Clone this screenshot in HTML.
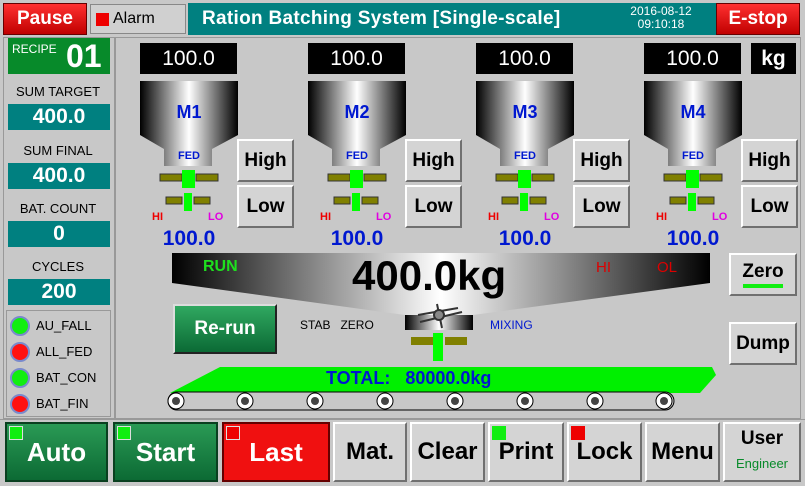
<!DOCTYPE html>
<html><head><meta charset="utf-8"><style>
*{margin:0;padding:0;box-sizing:border-box}
body{width:805px;height:486px;background:#c8c8c8;font-family:"Liberation Sans",sans-serif;position:relative;overflow:hidden}
.a{position:absolute}
.c{display:flex;align-items:center;justify-content:center}
.lbl{font-size:13px;color:#000;text-align:center;width:110px;left:3px}
.tv{left:8px;width:102px;height:26px;background:#008080;color:#fff;font-weight:bold;font-size:21px}
.blk{background:#000;color:#fff;font-size:21px;height:31px;width:97px;top:43px}
.btn{background:#d4d4d4;border:2px solid;border-color:#fff #707070 #707070 #fff;font-weight:bold;font-size:19px}
.bb{top:422px;height:60px;font-size:26px;font-weight:bold;font-family:"Liberation Sans Narrow","Liberation Sans",sans-serif}
.g{background:linear-gradient(#2a9a55,#0c6a34);color:#fff;border:2px solid #0a4020}
.sq{position:absolute;left:2px;top:2px;width:14px;height:14px;border:1px solid #ddd}
.dot{width:20px;height:20px;border-radius:50%;border:2px solid #7a8acc;left:10px}
.dl{left:36px;font-size:13px}
.m{color:#0018d0;font-weight:bold;font-size:18px;top:102px;width:98px;text-align:center}
.fd{color:#0018d0;font-size:11px;font-weight:bold;top:150px;width:98px;text-align:center}
.hi{color:#e00;font-size:11px;top:211px;font-weight:bold}
.lo{color:#e000e0;font-size:11px;top:211px;font-weight:bold}
.bv{color:#0018d0;font-size:21px;font-weight:bold;top:227px;width:98px;text-align:center}
</style></head><body>
<div class="a c" style="left:3px;top:3px;width:84px;height:32px;background:linear-gradient(#ff3030,#c00000);color:#fff;font-weight:bold;font-size:19px;border:1px solid #600">Pause</div>
<div class="a" style="left:90px;top:4px;width:96px;height:30px;background:#d0d0d0;border:1px solid #888;font-size:16px;padding:5px 0 0 22px">Alarm<div class="a" style="left:5px;top:8px;width:13px;height:13px;background:#e00"></div></div>
<div class="a" style="left:188px;top:3px;width:528px;height:32px;background:#008080"></div>
<div class="a" style="left:202px;top:8px;color:#fff;font-weight:bold;font-size:19px;letter-spacing:0.3px">Ration Batching System [Single-scale]</div>
<div class="a" style="left:622px;top:5px;color:#fff;font-size:12px;text-align:center;line-height:13px;width:78px">2016-08-12<br>09:10:18</div>
<div class="a c" style="left:716px;top:3px;width:84px;height:32px;background:linear-gradient(#ff3030,#c00000);color:#fff;font-weight:bold;font-size:19px;border:1px solid #600">E-stop</div>
<div class="a" style="left:3px;top:37px;width:112px;height:382px;border:1px solid #999"></div>
<div class="a" style="left:8px;top:38px;width:102px;height:36px;background:#078a2a;color:#fff"><span class="a" style="left:4px;top:4px;font-size:12px">RECIPE</span><span class="a" style="left:58px;top:0;font-size:32px;font-weight:bold">01</span></div>
<div class="a lbl" style="top:84px">SUM TARGET</div><div class="a tv c" style="top:104px">400.0</div>
<div class="a lbl" style="top:143px">SUM FINAL</div><div class="a tv c" style="top:163px">400.0</div>
<div class="a lbl" style="top:201px">BAT. COUNT</div><div class="a tv c" style="top:221px">0</div>
<div class="a lbl" style="top:259px">CYCLES</div><div class="a tv c" style="top:279px">200</div>
<div class="a" style="left:6px;top:310px;width:105px;height:107px;border:1px solid #999"></div>
<div class="a dot" style="top:316px;background:#1e1"></div><div class="a dl" style="top:318px">AU_FALL</div>
<div class="a dot" style="top:342px;background:#f11"></div><div class="a dl" style="top:344px">ALL_FED</div>
<div class="a dot" style="top:368px;background:#1e1"></div><div class="a dl" style="top:370px">BAT_CON</div>
<div class="a dot" style="top:394px;background:#f11"></div><div class="a dl" style="top:396px">BAT_FIN</div>
<div class="a" style="left:115px;top:37px;width:686px;height:382px;border:1px solid #999"></div>
<svg class="a" style="left:0;top:0" width="805" height="486">
<defs>
<linearGradient id="h" x1="0" x2="1"><stop offset="0" stop-color="#000"/><stop offset=".5" stop-color="#fff"/><stop offset="1" stop-color="#000"/></linearGradient>
<linearGradient id="f" x1="0" x2="1"><stop offset="0" stop-color="#000"/><stop offset=".5" stop-color="#fff"/><stop offset="1" stop-color="#000"/></linearGradient>
</defs>
<g id="hop">
<path d="M140 81H238V135L212 149V166H164V149L140 135Z" fill="url(#h)"/>
<rect x="160" y="174" width="22" height="7" fill="#808000" stroke="#333" stroke-width="1"/>
<rect x="196" y="174" width="22" height="7" fill="#808000" stroke="#333" stroke-width="1"/>
<rect x="182" y="170" width="13" height="18" fill="#0f0"/>
<rect x="166" y="197" width="16" height="7" fill="#808000" stroke="#333" stroke-width="1"/>
<rect x="194" y="197" width="16" height="7" fill="#808000" stroke="#333" stroke-width="1"/>
<rect x="184" y="193" width="8" height="18" fill="#0f0"/>
</g>
<use href="#hop" x="168"/><use href="#hop" x="336"/><use href="#hop" x="504"/>
<path d="M172 253H710V283L473 315H405L172 283Z" fill="url(#f)"/>
<rect x="405" y="315" width="68" height="15" fill="url(#f)"/>
<g stroke="#333" stroke-width="2" fill="#888"><path d="M418 315L458 308M420 322L462 312M437 304L442 328"/><circle cx="439" cy="315" r="5"/></g>
<rect x="411" y="337" width="22" height="8" fill="#808000"/><rect x="445" y="337" width="22" height="8" fill="#808000"/><rect x="433" y="333" width="10" height="28" fill="#0f0"/>
<path d="M170 393L220 367H712L716 375L700 393Z" fill="#00f000"/>
<rect x="168" y="392" width="506" height="18" rx="9" fill="#c8c8c8" stroke="#000"/>
<g fill="#fff" stroke="#000"><circle cx="176" cy="401" r="8"/><circle cx="245" cy="401" r="8"/><circle cx="315" cy="401" r="8"/><circle cx="385" cy="401" r="8"/><circle cx="455" cy="401" r="8"/><circle cx="525" cy="401" r="8"/><circle cx="595" cy="401" r="8"/><circle cx="664" cy="401" r="8"/></g>
<g fill="#444"><circle cx="176" cy="401" r="4"/><circle cx="245" cy="401" r="4"/><circle cx="315" cy="401" r="4"/><circle cx="385" cy="401" r="4"/><circle cx="455" cy="401" r="4"/><circle cx="525" cy="401" r="4"/><circle cx="595" cy="401" r="4"/><circle cx="664" cy="401" r="4"/></g>
</svg>
<div class="a blk c" style="left:140px">100.0</div>
<div class="a blk c" style="left:308px">100.0</div>
<div class="a blk c" style="left:476px">100.0</div>
<div class="a blk c" style="left:644px">100.0</div>
<div class="a blk c" style="left:751px;width:45px;font-weight:bold">kg</div>
<div class="a m" style="left:140px">M1</div><div class="a m" style="left:308px">M2</div><div class="a m" style="left:476px">M3</div><div class="a m" style="left:644px">M4</div>
<div class="a fd" style="left:140px">FED</div><div class="a fd" style="left:308px">FED</div><div class="a fd" style="left:476px">FED</div><div class="a fd" style="left:644px">FED</div>
<div class="a hi" style="left:152px">HI</div><div class="a hi" style="left:320px">HI</div><div class="a hi" style="left:488px">HI</div><div class="a hi" style="left:656px">HI</div>
<div class="a lo" style="left:208px">LO</div><div class="a lo" style="left:376px">LO</div><div class="a lo" style="left:544px">LO</div><div class="a lo" style="left:712px">LO</div>
<div class="a bv" style="left:140px">100.0</div><div class="a bv" style="left:308px">100.0</div><div class="a bv" style="left:476px">100.0</div><div class="a bv" style="left:644px">100.0</div>
<div class="a btn c" style="left:237px;top:139px;width:57px;height:43px">High</div><div class="a btn c" style="left:237px;top:185px;width:57px;height:43px">Low</div>
<div class="a btn c" style="left:405px;top:139px;width:57px;height:43px">High</div><div class="a btn c" style="left:405px;top:185px;width:57px;height:43px">Low</div>
<div class="a btn c" style="left:573px;top:139px;width:57px;height:43px">High</div><div class="a btn c" style="left:573px;top:185px;width:57px;height:43px">Low</div>
<div class="a btn c" style="left:741px;top:139px;width:57px;height:43px">High</div><div class="a btn c" style="left:741px;top:185px;width:57px;height:43px">Low</div>
<div class="a" style="left:203px;top:258px;color:#1ee01e;font-weight:bold;font-size:16px">RUN</div>
<div class="a" style="left:352px;top:252px;font-weight:bold;font-size:42px;color:#000">400.0kg</div>
<div class="a" style="left:596px;top:259px;color:#d00;font-size:15px">HI</div>
<div class="a" style="left:657px;top:259px;color:#d00;font-size:15px">OL</div>
<div class="a c" style="left:173px;top:304px;width:104px;height:50px;background:linear-gradient(#30a860,#0b6a35);border:2px solid #333;border-color:#ddd #222 #222 #ddd;color:#fff;font-weight:bold;font-size:19px">Re-run</div>
<div class="a" style="left:300px;top:318px;font-size:12px">STAB&nbsp;&nbsp; ZERO</div>
<div class="a" style="left:490px;top:318px;font-size:12px;color:#0018d0">MIXING</div>
<div class="a btn c" style="left:729px;top:253px;width:68px;height:43px;flex-direction:column">Zero<div style="width:40px;height:4px;background:#1e1;margin-top:1px"></div></div>
<div class="a btn c" style="left:729px;top:322px;width:68px;height:43px">Dump</div>
<div class="a" style="left:326px;top:368px;color:#0018d0;font-weight:bold;font-size:18px;font-family:'Liberation Sans Narrow','Liberation Sans',sans-serif">TOTAL:&nbsp;&nbsp;&nbsp;80000.0kg</div>
<div class="a" style="left:0;top:419px;width:805px;height:67px;background:#c8c8c8;border-top:1px solid #999"></div>
<div class="a bb g c" style="left:5px;width:103px">Auto<div class="sq" style="background:#1e1"></div></div>
<div class="a bb g c" style="left:113px;width:105px">Start<div class="sq" style="background:#1e1"></div></div>
<div class="a bb c" style="left:222px;width:108px;background:#f01010;color:#fff;border:2px solid #600">Last<div class="sq" style="background:#e00"></div></div>
<div class="a bb btn c" style="left:333px;width:74px;font-size:24px">Mat.</div>
<div class="a bb btn c" style="left:410px;width:75px;font-size:24px">Clear</div>
<div class="a bb btn c" style="left:488px;width:76px;font-size:24px">Print<div class="sq" style="background:#1e1;border:none"></div></div>
<div class="a bb btn c" style="left:567px;width:75px;font-size:24px">Lock<div class="sq" style="background:#e00;border:none"></div></div>
<div class="a bb btn c" style="left:645px;width:75px;font-size:24px">Menu</div>
<div class="a bb btn" style="left:723px;width:78px;text-align:center"><div style="font-size:19px;margin-top:4px">User</div><div style="font-size:13px;color:#078a2a;font-weight:normal;margin-top:6px">Engineer</div></div>
</body></html>
